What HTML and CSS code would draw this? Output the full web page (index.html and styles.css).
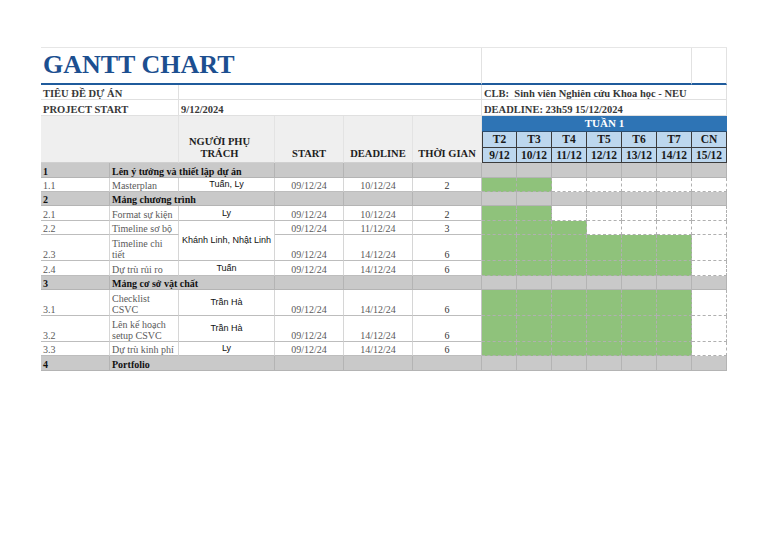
FILE: index.html
```html
<!DOCTYPE html>
<html lang="vi">
<head>
<meta charset="utf-8">
<title>Gantt Chart</title>
<link rel="stylesheet" href="styles.css">
</head>
<body>
<div class="sheet">
  <!-- title row -->
  <div class="c title s6">GANTT CHART</div>
  <div class="c trow s6"></div>
  <div class="c trow"></div>

  <!-- info rows -->
  <div class="c info s2">TIÊU ĐỀ DỰ ÁN</div>
  <div class="c info s4"></div>
  <div class="c info s7">CLB:&nbsp; Sinh viên Nghiên cứu Khoa học - NEU</div>

  <div class="c info s2">PROJECT START</div>
  <div class="c info s4">9/12/2024</div>
  <div class="c info s7">DEADLINE: 23h59 15/12/2024</div>

  <!-- header -->
  <div class="c hd s2 r3"></div>
  <div class="c hd r3 hd-person">NGƯỜI PHỤ<br>TRÁCH</div>
  <div class="c hd r3">START</div>
  <div class="c hd r3">DEADLINE</div>
  <div class="c hd r3">THỜI GIAN</div>
  <div class="c week s7">TUẦN 1</div>

  <div class="c day first">T2</div>
  <div class="c day">T3</div>
  <div class="c day">T4</div>
  <div class="c day">T5</div>
  <div class="c day">T6</div>
  <div class="c day">T7</div>
  <div class="c day">CN</div>

  <div class="c day first">9/12</div>
  <div class="c day">10/12</div>
  <div class="c day">11/12</div>
  <div class="c day">12/12</div>
  <div class="c day">13/12</div>
  <div class="c day">14/12</div>
  <div class="c day">15/12</div>

  <!-- section 1 -->
  <div class="c sec">1</div>
  <div class="c sec s2">Lên ý tưởng và thiết lập dự án</div>
  <div class="c sec"></div><div class="c sec"></div><div class="c sec"></div>
  <div class="c sg"></div><div class="c sg"></div><div class="c sg"></div><div class="c sg"></div><div class="c sg"></div><div class="c sg"></div><div class="c sg"></div>

  <div class="c num">1.1</div>
  <div class="c task">Masterplan</div>
  <div class="c person">Tuấn, Ly</div>
  <div class="c date">09/12/24</div>
  <div class="c date">10/12/24</div>
  <div class="c dur">2</div>
  <div class="c g on"></div><div class="c g on"></div><div class="c g"></div><div class="c g"></div><div class="c g"></div><div class="c g"></div><div class="c g"></div>

  <!-- section 2 -->
  <div class="c sec">2</div>
  <div class="c sec s2">Mảng chương trình</div>
  <div class="c sec"></div><div class="c sec"></div><div class="c sec"></div>
  <div class="c sg"></div><div class="c sg"></div><div class="c sg"></div><div class="c sg"></div><div class="c sg"></div><div class="c sg"></div><div class="c sg"></div>

  <div class="c num">2.1</div>
  <div class="c task">Format sự kiện</div>
  <div class="c person">Ly</div>
  <div class="c date">09/12/24</div>
  <div class="c date">10/12/24</div>
  <div class="c dur">2</div>
  <div class="c g on"></div><div class="c g on"></div><div class="c g"></div><div class="c g"></div><div class="c g"></div><div class="c g"></div><div class="c g"></div>

  <div class="c num">2.2</div>
  <div class="c task">Timeline sơ bộ</div>
  <div class="c person r2">Khánh Linh, Nhật Linh</div>
  <div class="c date">09/12/24</div>
  <div class="c date">11/12/24</div>
  <div class="c dur">3</div>
  <div class="c g on"></div><div class="c g on"></div><div class="c g on"></div><div class="c g"></div><div class="c g"></div><div class="c g"></div><div class="c g"></div>

  <div class="c num">2.3</div>
  <div class="c task">Timeline chi<br>tiết</div>
  <div class="c date">09/12/24</div>
  <div class="c date">14/12/24</div>
  <div class="c dur">6</div>
  <div class="c g on"></div><div class="c g on"></div><div class="c g on"></div><div class="c g on"></div><div class="c g on"></div><div class="c g on"></div><div class="c g"></div>

  <div class="c num">2.4</div>
  <div class="c task">Dự trù rủi ro</div>
  <div class="c person">Tuấn</div>
  <div class="c date">09/12/24</div>
  <div class="c date">14/12/24</div>
  <div class="c dur">6</div>
  <div class="c g on"></div><div class="c g on"></div><div class="c g on"></div><div class="c g on"></div><div class="c g on"></div><div class="c g on"></div><div class="c g"></div>

  <!-- section 3 -->
  <div class="c sec">3</div>
  <div class="c sec s2">Mảng cơ sở vật chất</div>
  <div class="c sec"></div><div class="c sec"></div><div class="c sec"></div>
  <div class="c sg"></div><div class="c sg"></div><div class="c sg"></div><div class="c sg"></div><div class="c sg"></div><div class="c sg"></div><div class="c sg"></div>

  <div class="c num">3.1</div>
  <div class="c task">Checklist<br>CSVC</div>
  <div class="c person">Trần Hà</div>
  <div class="c date">09/12/24</div>
  <div class="c date">14/12/24</div>
  <div class="c dur">6</div>
  <div class="c g on"></div><div class="c g on"></div><div class="c g on"></div><div class="c g on"></div><div class="c g on"></div><div class="c g on"></div><div class="c g"></div>

  <div class="c num">3.2</div>
  <div class="c task">Lên kế hoạch<br>setup CSVC</div>
  <div class="c person">Trần Hà</div>
  <div class="c date">09/12/24</div>
  <div class="c date">14/12/24</div>
  <div class="c dur">6</div>
  <div class="c g on"></div><div class="c g on"></div><div class="c g on"></div><div class="c g on"></div><div class="c g on"></div><div class="c g on"></div><div class="c g"></div>

  <div class="c num">3.3</div>
  <div class="c task">Dự trù kinh phí</div>
  <div class="c person">Ly</div>
  <div class="c date">09/12/24</div>
  <div class="c date">14/12/24</div>
  <div class="c dur">6</div>
  <div class="c g on"></div><div class="c g on"></div><div class="c g on"></div><div class="c g on"></div><div class="c g on"></div><div class="c g on"></div><div class="c g"></div>

  <!-- section 4 -->
  <div class="c sec">4</div>
  <div class="c sec s2">Portfolio</div>
  <div class="c sec"></div><div class="c sec"></div><div class="c sec"></div>
  <div class="c sg"></div><div class="c sg"></div><div class="c sg"></div><div class="c sg"></div><div class="c sg"></div><div class="c sg"></div><div class="c sg"></div>
</div>
</body>
</html>
```

FILE: styles.css
```css
html, body {
  margin: 0;
  padding: 0;
  background: #ffffff;
}

body {
  font-family: "Liberation Serif", "Times New Roman", serif;
  color: #222;
}

.sheet {
  display: grid;
  grid-template-columns: 69px 69px 96px 69px 69px 69px repeat(7, 35px);
  grid-template-rows: 37px 15px 16px 16px 16px 15px 15px 14px 14px 15px 14px 26px 15px 14px 26px 26px 14px 15px;
  width: 686px;
  margin: 47px 0 0 41px;
  border-top: 1px solid #e6e6e6;
}

.c {
  box-sizing: border-box;
  min-width: 0;
  display: flex;
  align-items: flex-end;
  padding: 0 2px;
  font-family: "Liberation Serif", "Times New Roman", serif;
  font-size: 10px;
  line-height: 11px;
  white-space: nowrap;
  border-right: 1px solid #d6d6d6;
  border-bottom: 1px solid #bdbdbd;
}

.s2 { grid-column: span 2; }
.s4 { grid-column: span 4; }
.s6 { grid-column: span 6; }
.s7 { grid-column: span 7; }
.r2 { grid-row: span 2; }
.r3 { grid-row: span 3; }

/* title row */
.title {
  align-items: flex-start;
  padding: 4px 2px 0;
  font-family: "Liberation Serif", "Times New Roman", serif;
  font-size: 26px;
  line-height: 26px;
  font-weight: bold;
  color: #1c4f90;
  border-right: 1px solid #e2e2e2;
  border-bottom: 2px solid #1f5b9c;
}
.trow {
  border-right: 1px solid #e2e2e2;
  border-bottom: 2px solid #1f5b9c;
}

/* info rows */
.info {
  font-size: 10.5px;
  font-weight: bold;
  color: #383838;
  border-right: 1px solid #e0e0e0;
  border-bottom: 1px solid #e0e0e0;
}

/* header */
.hd {
  justify-content: center;
  text-align: center;
  padding-bottom: 2px;
  font-size: 10.5px;
  line-height: 12px;
  font-weight: bold;
  color: #1e1e1e;
  background: #efefef;
  border-right: 1px solid #e3e3e3;
  border-bottom: 1px solid #d0d0d0;
}
.hd-person {
  padding-right: 16px;
}

.week {
  justify-content: center;
  align-items: center;
  font-size: 11px;
  font-weight: bold;
  color: #ffffff;
  background: #2e74b5;
  border-right: none;
  border-bottom: 1px solid #2a4d70;
}

.day {
  justify-content: center;
  align-items: center;
  padding: 0;
  font-size: 11.5px;
  font-weight: bold;
  color: #1a1a1a;
  background: #bdd7ee;
  border-right: 1px solid #3b3b3b;
  border-bottom: 1px solid #3b3b3b;
}
.day.first {
  border-left: 1px solid #3b3b3b;
}

/* section rows */
.sec {
  font-weight: bold;
  color: #111;
  background: #c9c9c9;
  border-right: 1px solid #b4b4b4;
  border-bottom: 1px solid #b4b4b4;
}
.sg {
  background: #c9c9c9;
  border-right: 1px solid #b4b4b4;
  border-bottom: 1px solid #b4b4b4;
}

/* task rows */
.num {
  color: #5a5a5a;
}
.task {
  color: #5a5a5a;
  white-space: normal;
}
.person {
  justify-content: center;
  align-items: center;
  font-family: "Liberation Sans", Arial, sans-serif;
  font-size: 9px;
  color: #111;
}
.date {
  justify-content: center;
  color: #5a5a5a;
}
.dur {
  justify-content: center;
  color: #333;
  border-right: 1px solid #c4c4c4;
}

.g {
  border-right: 1px dashed #b0b0b0;
  border-bottom: 1px dashed #b0b0b0;
}
.g.on {
  background: #8fc27b;
}
```
